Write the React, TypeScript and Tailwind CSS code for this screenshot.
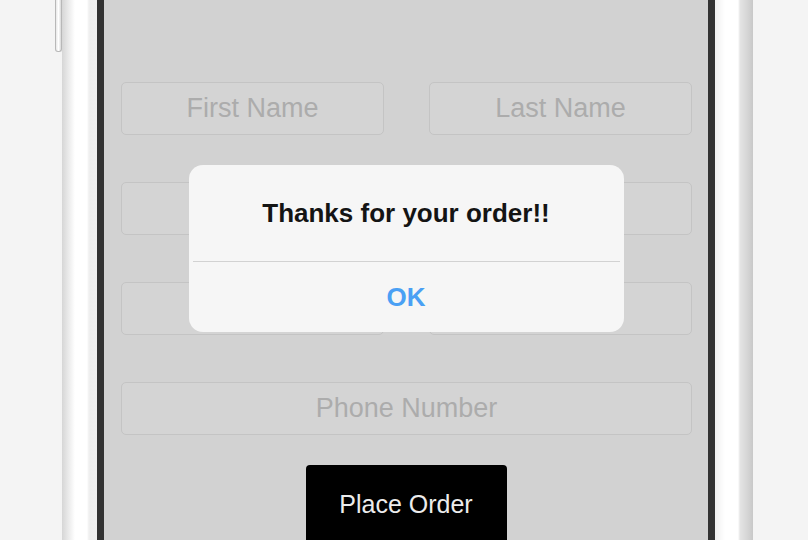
const fields: { left: string; right: string }[] = [
  { left: "First Name", right: "Last Name" },
  { left: "", right: "" },
  { left: "", right: "" },
];

function Field({ label, className = "" }: { label: string; className?: string }) {
  return (
    <div
      className={`h-[53px] flex items-center justify-center rounded-[5px] border border-[#c4c4c4] bg-[#d4d4d4] text-[27px] text-[#acacac] ${className}`}
    >
      {label}
    </div>
  );
}

function OrderScreen() {
  return (
    <div className="relative w-[604px] h-[540px] bg-[#d2d2d2] overflow-hidden">
      <div className="flex flex-col gap-[47px] pt-[82px] pl-[17px] pr-[16px]">
        {fields.map((row, i) => (
          <div key={i} className="flex gap-[45px]">
            <Field label={row.left} className="flex-1" />
            <Field label={row.right} className="flex-1" />
          </div>
        ))}
        <Field label="Phone Number" />
      </div>

      <div className="flex justify-center pt-[30px]">
        <button className="w-[201px] h-[80px] rounded-[4px] bg-black text-[25px] text-[#ececec]">
          Place Order
        </button>
      </div>

      {/* alert over the dimmed form */}
      <div className="absolute inset-0 flex justify-center pt-[165px]">
        <div className="w-[435px] h-[167px] rounded-[14px] bg-[#f6f6f6] flex flex-col">
          <div className="h-[96px] flex items-center justify-center text-[26px] font-bold text-[#141414]">
            Thanks for your order!!
          </div>
          <div className="mx-[4px] h-px bg-[#d2d2d2]" />
          <div className="flex-1 flex items-center justify-center text-[26px] font-bold text-[#4aa0f4]">
            OK
          </div>
        </div>
      </div>
    </div>
  );
}

export default function App() {
  return (
    <div className="w-[808px] h-[540px] overflow-hidden bg-[#f4f4f4] flex font-['Liberation_Sans',Arial,sans-serif]">
      <div className="ml-[55px] mt-0 w-[7px] h-[52px] rounded-b-[3px] border border-t-0 border-[#b8b8b8] bg-[linear-gradient(to_right,#e8e8e8,#ffffff,#d8d8d8)]" />
      <div className="w-[691px] h-[540px] flex pl-[35px] pr-[38px] bg-[linear-gradient(to_right,#d6d6d6_0px,#e9e9e9_6px,#ffffff_13px,#ffffff_25px,#efefef_27px,#f1f1f1_35px,#f0f0f0_653px,#ffffff_663px,#ffffff_676px,#e4e4e4_678px,#d4d4d4_686px,#c8c8c8_691px)]">
        <div className="w-[618px] h-[540px] bg-[#333333] px-[7px]">
          <OrderScreen />
        </div>
      </div>
    </div>
  );
}
